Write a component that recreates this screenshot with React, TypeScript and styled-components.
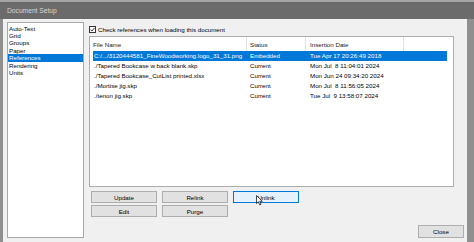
import React from "react";
import styled, { createGlobalStyle } from "styled-components";

const GlobalStyle = createGlobalStyle`
  html, body { margin: 0; padding: 0; background: #8c8c8c; }
  body { font-family: "Liberation Sans", Arial, sans-serif; }
  * { box-sizing: border-box; }
`;

const Screen = styled.div`
  width: 474px;
  height: 242px;
  display: flex;
  flex-direction: column;
  overflow: hidden;
  background: #8e8e8e;
  font-family: "Liberation Sans", Arial, sans-serif;
  font-size: 6.2px;
  color: #000;
`;

const TopStrip = styled.div`
  height: 2px;
  background: #a4a4a4;
`;

const TitleBar = styled.div`
  height: 17px;
  background: #6b6b6b;
  color: #d6d6d6;
  font-size: 6.7px;
  display: flex;
  align-items: center;
  padding-left: 7px;
`;

const BodyRow = styled.div`
  flex: 1;
  display: flex;
  padding: 0 7px 0 3px;
  background: #8f8f8f;
`;

const Dialog = styled.div`
  flex: 1;
  display: flex;
  gap: 5px;
  background: #f0f0f0;
  padding: 3px 3px 4px 4px;
`;

const CategoryList = styled.ul`
  width: 77px;
  margin: 0;
  padding: 1.6px 0 0 0;
  list-style: none;
  background: #fff;
  border: 1px solid #a8a8a8;
`;

const CategoryItem = styled.li<{ $selected?: boolean }>`
  height: 7.4px;
  line-height: 7.4px;
  padding-left: 1px;
  white-space: nowrap;
  background: ${(p) => (p.$selected ? "#0078d7" : "transparent")};
  color: ${(p) => (p.$selected ? "#fff" : "#000")};
`;

const RightColumn = styled.div`
  flex: 1;
  display: flex;
  flex-direction: column;
`;

const CheckRow = styled.label`
  height: 14px;
  display: flex;
  align-items: center;
  gap: 2px;
  white-space: nowrap;
`;

const CheckBox = styled.span`
  width: 7px;
  height: 7px;
  border: 1px solid #333;
  background: #fff;
  display: flex;
  align-items: center;
  justify-content: center;
`;

const TableBox = styled.div`
  height: 151px;
  margin-right: 10px;
  background: #fff;
  border: 1px solid #adadad;
  display: flex;
  flex-direction: column;
`;

const HeaderRow = styled.div`
  display: grid;
  grid-template-columns: 157px 59px 98px 1fr;
  height: 14px;
`;

const HeaderCell = styled.div<{ $pad: number; $sep?: boolean }>`
  padding-left: ${(p) => p.$pad}px;
  padding-top: 4px;
  line-height: 8px;
  white-space: nowrap;
  color: #222;
  border-right: ${(p) => (p.$sep ? "1px solid #e3e3e3" : "none")};
`;

const DataRow = styled.div<{ $selected?: boolean }>`
  display: grid;
  grid-template-columns: 156px 60px 1fr;
  height: 10px;
  line-height: 10px;
  margin: 0 6px 0 3px;
  padding-left: 1px;
  white-space: nowrap;
  background: ${(p) => (p.$selected ? "#0078d7" : "transparent")};
  color: ${(p) => (p.$selected ? "#fff" : "#000")};
`;

const Cell = styled.span`
  overflow: hidden;
`;

const ButtonGrid = styled.div`
  display: grid;
  grid-template-columns: repeat(3, 66px);
  grid-auto-rows: 12px;
  gap: 2px 5px;
  margin: 4px 0 0 2px;
`;

const Button = styled.button<{ $hot?: boolean }>`
  position: relative;
  margin: 0;
  padding: 0;
  font: inherit;
  color: #000;
  background: ${(p) => (p.$hot ? "#e5f1fb" : "#e1e1e1")};
  border: 1px solid ${(p) => (p.$hot ? "#0078d7" : "#adadad")};
  display: flex;
  align-items: center;
  justify-content: center;
`;

const Footer = styled.div`
  margin-top: auto;
  display: flex;
  justify-content: flex-end;
`;

const CloseButton = styled(Button)`
  width: 46px;
  height: 13px;
`;

const Cursor = styled.svg`
  position: absolute;
  left: 22px;
  top: 3px;
  pointer-events: none;
`;

const categories = ["Auto-Text", "Grid", "Groups", "Paper", "References", "Rendering", "Units"];

const rows = [
  { name: "C:/.../3120444581_FineWoodworking.logo_31_31.png", status: "Embedded", date: "Tue Apr 17 20:26:49 2018" },
  { name: "./Tapered Bookcase w back blank.skp", status: "Current", date: "Mon Jul  8 11:04:01 2024" },
  { name: "./Tapered Bookcase_CutList printed.xlsx", status: "Current", date: "Mon Jun 24 09:34:20 2024" },
  { name: "./Mortise jig.skp", status: "Current", date: "Mon Jul  8 11:56:05 2024" },
  { name: "./tenon jig.skp", status: "Current", date: "Tue Jul  9 13:58:07 2024" },
];

export default function App() {
  return (
    <>
      <GlobalStyle />
      <Screen>
        <TopStrip />
        <TitleBar>Document Setup</TitleBar>
        <BodyRow>
          <Dialog>
            <CategoryList>
              {categories.map((c) => (
                <CategoryItem key={c} $selected={c === "References"}>
                  {c}
                </CategoryItem>
              ))}
            </CategoryList>
            <RightColumn>
              <CheckRow>
                <CheckBox>
                  <svg width="5" height="5" viewBox="0 0 5 5">
                    <path d="M0.5 2.6 L2 4 L4.6 0.8" fill="none" stroke="#222" strokeWidth="0.9" />
                  </svg>
                </CheckBox>
                Check references when loading this document
              </CheckRow>
              <TableBox>
                <HeaderRow>
                  <HeaderCell $pad={3} $sep>File Name</HeaderCell>
                  <HeaderCell $pad={3} $sep>Status</HeaderCell>
                  <HeaderCell $pad={4} $sep>Insertion Date</HeaderCell>
                  <HeaderCell $pad={0} />
                </HeaderRow>
                {rows.map((r, i) => (
                  <DataRow key={r.name} $selected={i === 0}>
                    <Cell>{r.name}</Cell>
                    <Cell>{r.status}</Cell>
                    <Cell style={{ whiteSpace: "pre" }}>{r.date}</Cell>
                  </DataRow>
                ))}
              </TableBox>
              <ButtonGrid>
                <Button>Update</Button>
                <Button>Relink</Button>
                <Button $hot>
                  Unlink
                  <Cursor width="7" height="11" viewBox="0 0 7 11">
                    <path d="M0.5 0.5 L0.5 8.5 L2.4 6.8 L3.7 9.8 L5 9.2 L3.7 6.3 L6.3 6.3 Z" fill="#fff" stroke="#000" strokeWidth="0.7" strokeLinejoin="round" />
                  </Cursor>
                </Button>
                <Button>Edit</Button>
                <Button>Purge</Button>
              </ButtonGrid>
              <Footer>
                <CloseButton>Close</CloseButton>
              </Footer>
            </RightColumn>
          </Dialog>
        </BodyRow>
      </Screen>
    </>
  );
}
